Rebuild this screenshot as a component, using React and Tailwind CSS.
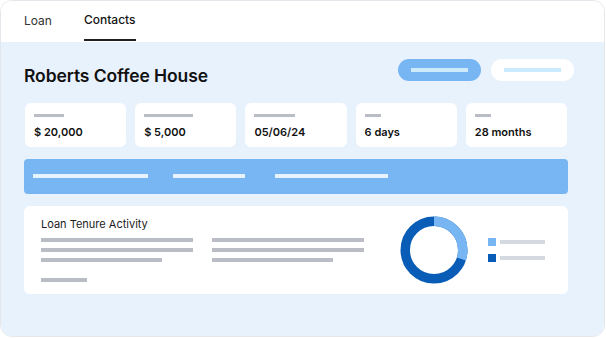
export default function App() {
  const stats = [
    { bar: "w-[30px]", value: "$ 20,000" },
    { bar: "w-[49px]", value: "$ 5,000" },
    { bar: "w-[41px]", value: "05/06/24" },
    { bar: "w-[16px]", value: "6 days" },
    { bar: "w-[16px]", value: "28 months" },
  ]

  // donut: light slice ~30% from 12 o'clock clockwise
  const r = 28.75
  const c = 2 * Math.PI * r
  const light = 0.3 * c

  return (
    <div className="w-[606px] h-[338px] bg-white font-['Inter',sans-serif]">
      <div className="w-[605px] h-[337px] rounded-[12px] border border-[#e4e7ec] overflow-hidden flex flex-col">
        {/* Tabs */}
        <div className="h-[41px] bg-white flex items-stretch pl-[23px] gap-[32px] text-[12px] leading-[16px]">
          <div className="flex items-center text-[#333] pb-[3px] pt-px">Loan</div>
          <div className="flex items-center text-[#141414] font-medium border-b-2 border-[#1f1f1f] pb-[1px] pt-px mb-px">
            Contacts
          </div>
        </div>

        {/* Main */}
        <div className="flex-1 bg-[#e8f2fd] pl-[23px] pt-[17px]">
          <div className="w-[550px] h-[22px] flex justify-between items-start">
            <h1 className="text-[17.5px] leading-[24px] font-semibold text-[#111] mt-[5px] tracking-[-0.1px]">
              Roberts Coffee House
            </h1>
            <div className="flex gap-[10px]">
              <div className="w-[83px] h-[22px] rounded-full bg-[#78b5f3] flex items-center justify-center">
                <div className="w-[57px] h-[4px] bg-[#cdebfd]" />
              </div>
              <div className="w-[83px] h-[22px] rounded-full bg-white flex items-center justify-center">
                <div className="w-[57px] h-[4px] bg-[#c9ebfd]" />
              </div>
            </div>
          </div>

          {/* Stat cards */}
          <div className="w-[542px] ml-px mt-[22px] grid grid-cols-5 gap-[9px]">
            {stats.map((s) => (
              <div key={s.value} className="h-[44px] rounded-[6px] bg-white pl-[9px] pt-[11px]">
                <div className={`${s.bar} h-[3px] bg-[#babdc6]`} />
                <div className="mt-[8px] text-[11px] leading-[14px] font-semibold text-[#111]">
                  {s.value}
                </div>
              </div>
            ))}
          </div>

          {/* Banner */}
          <div className="w-[544px] h-[35px] mt-[12px] rounded-[4px] bg-[#78b5f3] flex items-start pt-[15px] pl-[9px]">
            <div className="w-[115px] h-[4px] bg-[#e8f2fd]" />
            <div className="w-[72px] h-[4px] bg-[#e8f2fd] ml-[25px]" />
            <div className="w-[113px] h-[4px] bg-[#e8f2fd] ml-[30px]" />
          </div>

          {/* Activity card */}
          <div className="w-[544px] h-[88px] mt-[12px] rounded-[6px] bg-white flex items-center">
            <div className="self-start pl-[17px] pt-[11px]">
              <div className="text-[11px] leading-[14px] text-[#1c1c1c]">Loan Tenure Activity</div>
              <div className="flex gap-[19px] mt-[7px]">
                <div className="flex flex-col gap-[6px]">
                  <div className="w-[152px] h-[4px] bg-[#babdc6]" />
                  <div className="w-[152px] h-[4px] bg-[#babdc6]" />
                  <div className="w-[121px] h-[4px] bg-[#babdc6]" />
                  <div className="w-[46px] h-[4px] bg-[#babdc6] mt-[10px]" />
                </div>
                <div className="flex flex-col gap-[6px]">
                  <div className="w-[152px] h-[4px] bg-[#babdc6]" />
                  <div className="w-[152px] h-[4px] bg-[#babdc6]" />
                  <div className="w-[121px] h-[4px] bg-[#babdc6]" />
                </div>
              </div>
            </div>

            <svg width="68" height="68" viewBox="0 0 68 68" className="ml-[36px]">
              <circle cx="34" cy="34" r={r} fill="none" stroke="#0a5db7" strokeWidth="9.5" />
              <circle
                cx="34"
                cy="34"
                r={r}
                fill="none"
                stroke="#78b5f3"
                strokeWidth="9.5"
                strokeDasharray={`${light} ${c}`}
                transform="rotate(-90 34 34)"
              />
            </svg>

            <div className="ml-[20px] flex flex-col gap-[8px]">
              <div className="flex items-center gap-[4px]">
                <div className="w-[8px] h-[8px] bg-[#78b5f3]" />
                <div className="w-[45px] h-[4px] bg-[#d5d9e2]" />
              </div>
              <div className="flex items-center gap-[4px]">
                <div className="w-[8px] h-[8px] bg-[#0a5db7]" />
                <div className="w-[45px] h-[4px] bg-[#d5d9e2]" />
              </div>
            </div>
          </div>
        </div>
      </div>
    </div>
  )
}
